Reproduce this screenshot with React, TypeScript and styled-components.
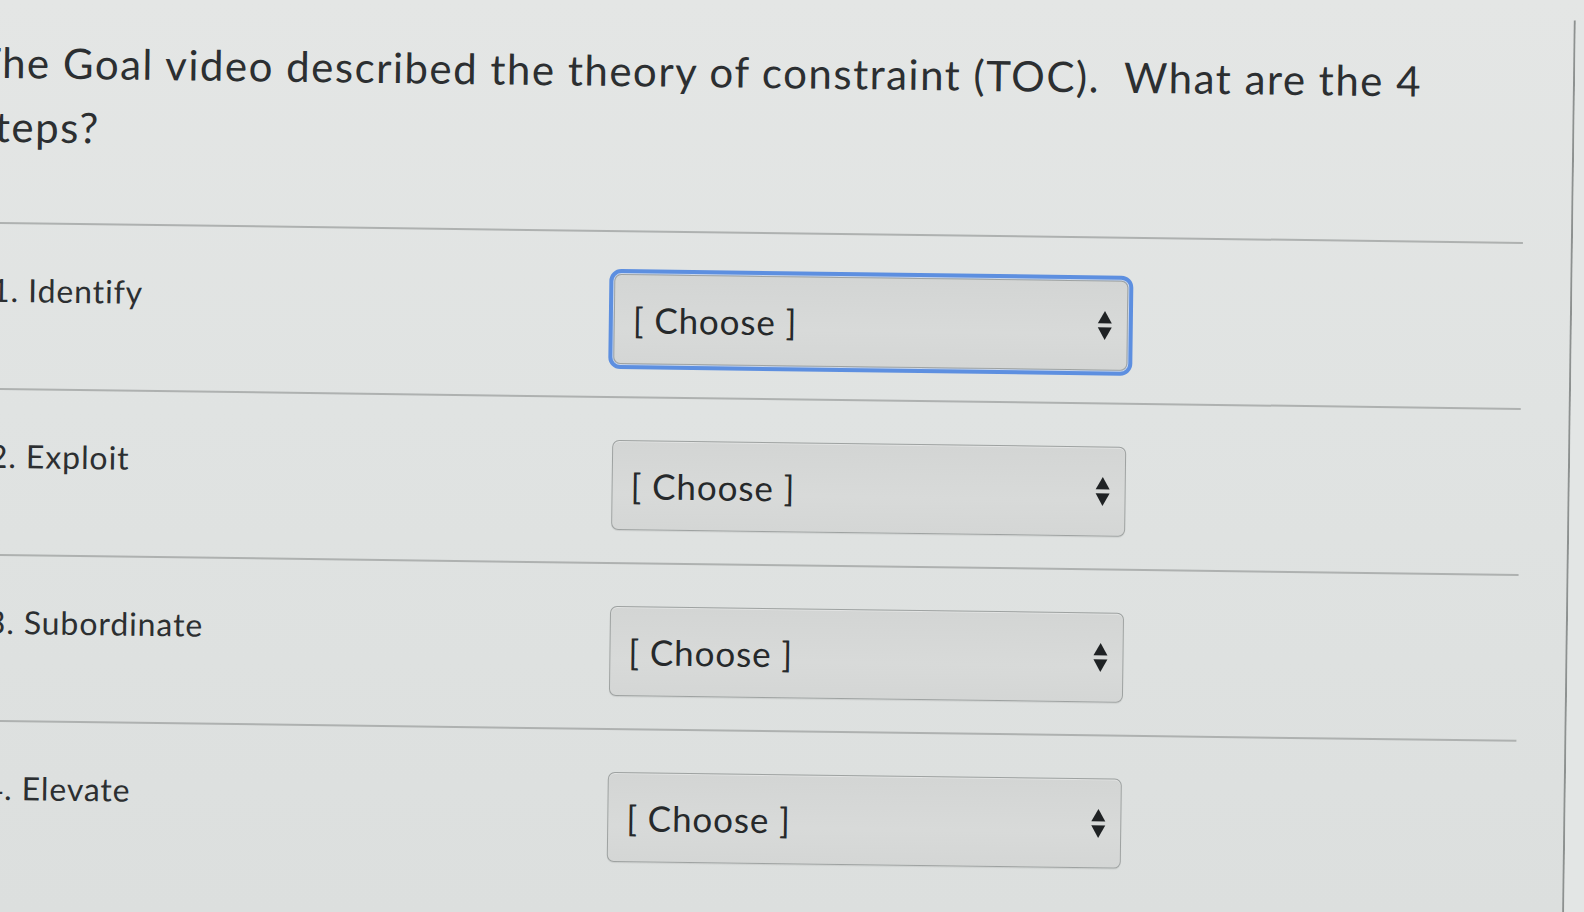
import React from "react";
import styled, { createGlobalStyle } from "styled-components";

const GlobalStyle = createGlobalStyle`
  html, body { margin: 0; padding: 0; background: #dfe2e1; overflow: hidden; }
  * { box-sizing: border-box; }
`;

const Page = styled.div`
  width: 1584px;
  height: 912px;
  overflow: hidden;
  background: linear-gradient(180deg, #e4e6e5 0%, #e0e3e2 45%, #dcdfde 100%);
  font-family: Lato, "Open Sans", sans-serif;
  color: #2c2f31;
`;

const Frame = styled.div`
  width: 1640px;
  height: 960px;
  margin-top: -20px;
  padding-top: 20px;
  display: flex;
  transform: rotate(0.75deg);
  transform-origin: 0 476px;
`;

const Panel = styled.div`
  width: 1590px;
  margin-left: -20px;
  border-right: 2px solid #8d9190;
  padding-top: 30px;
`;

const Side = styled.div`
  flex: 1;
  background: #e3e6e5;
`;

const Title = styled.h1`
  margin: 0 0 0 -9px;
  width: 1480px;
  font-size: 42px;
  line-height: 64px;
  font-weight: 400;
  letter-spacing: 1.5px;
  color: #2c2f31;
`;

const List = styled.div`
  margin-top: 64px;
  width: 1540px;
`;

const Row = styled.div`
  display: grid;
  grid-template-columns: 632px 514px;
  height: 166px;
  padding-top: 42px;
  border-top: 2px solid #aeb1b0;
`;

const Label = styled.div`
  margin: 6px 0 0 9px;
  font-size: 32px;
  line-height: 36px;
  letter-spacing: 0.9px;
  color: #2c2f31;
`;

const Select = styled.div<{ $focused?: boolean }>`
  height: 90px;
  display: flex;
  align-items: center;
  justify-content: space-between;
  padding: 0 14px 0 18px;
  border: 1.5px solid #9ea2a1;
  border-radius: 7px;
  background: linear-gradient(180deg, #d3d5d4 0%, #d8dad9 60%, #d4d6d5 100%);
  box-shadow: ${(p) =>
    p.$focused
      ? "0 0 0 1px #c9d6ea, 0 0 0 5px #5d8fe0"
      : "inset 0 1px 0 rgba(255,255,255,0.35), 0 1px 1px rgba(0,0,0,0.08)"};
  font-size: 35px;
  letter-spacing: 0.9px;
  color: #26292b;
`;

const Arrows = styled.svg`
  width: 16px;
  height: 36px;
  flex: none;
`;

const steps = ["1. Identify", "2. Exploit", "3. Subordinate", "4. Elevate"];

export default function App() {
  return (
    <Page>
      <GlobalStyle />
      <Frame>
        <Panel>
          <Title>
            The Goal video described the theory of constraint (TOC).&nbsp; What are the 4 steps?
          </Title>
          <List>
            {steps.map((s, i) => (
              <Row key={s}>
                <Label>{s}</Label>
                <Select $focused={i === 0}>
                  <span>[ Choose ]</span>
                  <Arrows viewBox="0 0 16 36">
                    <path d="M8 3.5 L15 16 L1 16 Z" fill="#1f2224" />
                    <path d="M8 32.5 L15 20 L1 20 Z" fill="#1f2224" />
                  </Arrows>
                </Select>
              </Row>
            ))}
          </List>
        </Panel>
        <Side />
      </Frame>
    </Page>
  );
}
